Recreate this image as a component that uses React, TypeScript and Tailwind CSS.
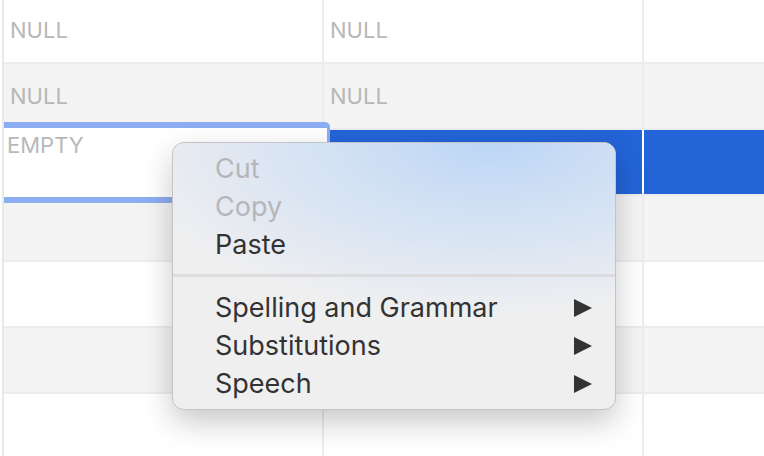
import React from 'react';

const rows = [
  { bg: 'bg-white', cells: ['NULL', 'NULL', ''] },
  { bg: 'bg-[#f4f4f4]', cells: ['NULL', 'NULL', ''] },
  { bg: 'selected', cells: ['EMPTY', '', ''] },
  { bg: 'bg-[#f4f4f4]', cells: ['', '', ''] },
  { bg: 'bg-white', cells: ['', '', ''] },
  { bg: 'bg-[#f4f4f4]', cells: ['', '', ''] },
  { bg: 'bg-white', cells: ['', '', ''] },
];

const menuItems = [
  { label: 'Cut', disabled: true },
  { label: 'Copy', disabled: true },
  { label: 'Paste', disabled: false },
];

const subItems = ['Spelling and Grammar', 'Substitutions', 'Speech'];

const Arrow = () => (
  <svg width="18" height="18" viewBox="0 0 18 18" className="shrink-0">
    <polygon points="0,0 18,9 0,18" fill="#333333" />
  </svg>
);

export default function App() {
  return (
    <div className="relative w-[764px] h-[456px] overflow-hidden bg-white font-['Inter','Liberation_Sans',sans-serif]">
      {/* Table */}
      <div className="-mt-[2px] ml-[2px] border-l-2 border-[#e8e8e8] flex flex-col">
        {rows.map((row, i) => {
          if (row.bg === 'selected') {
            return (
              <div key={i} className="flex h-[66px] border-b-2 border-[#ececec]">
                <div className="relative w-[320px] shrink-0 bg-white">
                  <div className="absolute -top-[8px] left-0 w-[326px] h-[81px] border-t-[6px] border-b-[6px] border-r-[3px] border-[#8cadf0] rounded-tr-[5px] bg-white z-10 pl-[3px] pt-[5px]">
                    <span className="block text-[22px] leading-[24px] text-[#b8b8b8]">{row.cells[0]}</span>
                  </div>
                </div>
                <div className="w-[320px] shrink-0 bg-[#2364d8] border-r-2 border-white" />
                <div className="flex-1 bg-[#2364d8]" />
              </div>
            );
          }
          return (
            <div key={i} className={`flex h-[66px] border-b-2 border-[#ececec] ${row.bg}`}>
              <div className="w-[320px] shrink-0 border-r-2 border-[#ececec] pl-[6px] pt-[20px]">
                <span className="block text-[22px] leading-[24px] text-[#b8b8b8]">{row.cells[0]}</span>
              </div>
              <div className="w-[320px] shrink-0 border-r-2 border-[#ececec] pl-[6px] pt-[20px]">
                <span className="block text-[22px] leading-[24px] text-[#b8b8b8]">{row.cells[1]}</span>
              </div>
              <div className="flex-1" />
            </div>
          );
        })}
      </div>

      {/* Context menu */}
      <div className="absolute left-[172px] top-[142px] w-[444px] h-[268px] rounded-[12px] border border-[#c4c4c6] bg-[#efeff0] shadow-[0_12px_30px_rgba(0,0,0,0.22)] overflow-hidden z-20">
        <div className="absolute inset-0 bg-[radial-gradient(ellipse_85%_65%_at_72%_0%,#bcd6f5_0%,#d2e1f4_40%,rgba(239,239,240,0)_100%)]" />
        <div className="relative pt-[7px]">
          {menuItems.map((item) => (
            <div
              key={item.label}
              className={`h-[38px] pl-[42px] text-[27px] leading-[38px] ${item.disabled ? 'text-[#b6b6b8]' : 'text-[#333333]'}`}
            >
              {item.label}
            </div>
          ))}
          <div className="mt-[10px] mb-[12px] h-[3px] bg-[#dcdcdf]" />
          {subItems.map((label) => (
            <div key={label} className="flex items-center justify-between h-[38px] pl-[42px] pr-[23px] text-[27px] leading-[38px] text-[#333333]">
              <span>{label}</span>
              <Arrow />
            </div>
          ))}
        </div>
      </div>
    </div>
  );
}
